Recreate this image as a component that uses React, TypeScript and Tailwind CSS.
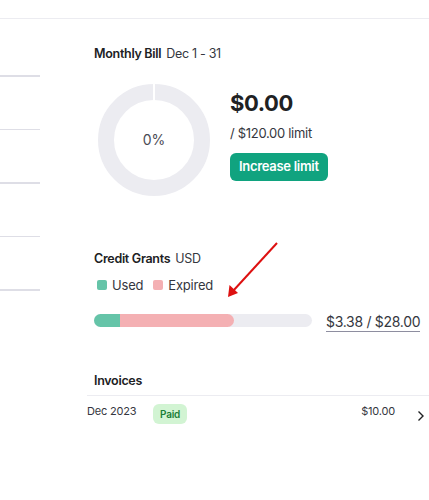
import React from "react";

const font = { fontFamily: "Inter, 'Liberation Sans', sans-serif" };

function Donut() {
  return (
    <svg width="112" height="112" viewBox="0 0 112 112" className="shrink-0">
      <circle cx="56" cy="56" r="48" fill="none" stroke="#ececf1" strokeWidth="16" />
      <line x1="56" y1="0" x2="56" y2="17" stroke="#ffffff" strokeWidth="2" />
      <text x="56" y="61" textAnchor="middle" fontSize="14" fill="#4b4b55" style={font}>
        0%
      </text>
    </svg>
  );
}

function Arrow() {
  return (
    <svg className="pointer-events-none absolute left-0 top-0" width="429" height="500">
      <line x1="277" y1="243" x2="233" y2="291" stroke="#dd1010" strokeWidth="2" />
      <polygon points="228,297 229.5,285 238,293" fill="#dd1010" />
    </svg>
  );
}

export default function App() {
  return (
    <div className="relative h-[500px] w-[429px] overflow-hidden bg-white text-[#202123]" style={font}>
      <div className="h-[19px] border-b border-[#ececf1]" />
      <div className="flex">
        <div className="w-[40px] shrink-0 pt-[56px]">
          {[0, 1, 2, 3, 4].map((i) => (
            <div key={i} className="mb-[52px] h-[1.5px] bg-[#dedee6]" />
          ))}
        </div>

        <div className="ml-[47px] flex-1">
          <section className="px-[7px] pt-[26px]">
            <div className="flex items-baseline gap-[5px] text-[12.5px] leading-[18px] tracking-[-0.3px]">
              <span className="font-semibold">Monthly Bill</span>
              <span className="text-[#353740]">Dec 1 - 31</span>
            </div>
            <div className="mt-[21px] flex items-start gap-[20px] pl-[4px]">
              <Donut />
              <div className="pt-[6px]">
                <div className="text-[22px] font-bold leading-[26px] tracking-[-0.4px]">$0.00</div>
                <div className="mt-[9px] text-[13px] leading-[16px] tracking-[-0.3px] text-[#353740]">
                  / $120.00 limit
                </div>
                <button
                  type="button"
                  className="mt-[12px] h-[28px] rounded-[6px] bg-[#10a37f] px-[9px] text-[13px] font-semibold tracking-[-0.3px] text-white"
                >
                  Increase limit
                </button>
              </div>
            </div>
          </section>

          <section className="px-[7px] pt-[54px]">
            <div className="flex items-baseline gap-[5px] text-[12.5px] leading-[18px] tracking-[-0.3px]">
              <span className="font-semibold">Credit Grants</span>
              <span className="text-[#353740]">USD</span>
            </div>
            <div className="mt-[8px] flex items-center gap-[5px] pl-[3px] text-[13px] leading-[18px] tracking-[-0.2px] text-[#353740]">
              <span className="h-[10px] w-[10px] rounded-[2px] bg-[#65c4a8]" />
              <span className="mr-[5px]">Used</span>
              <span className="h-[10px] w-[10px] rounded-[2px] bg-[#f4b0b3]" />
              <span>Expired</span>
            </div>
            <div className="mt-[15px] flex items-center gap-[14px]">
              <div className="flex h-[13px] w-[218px] shrink-0 overflow-hidden rounded-full bg-[#ececf1]">
                <div className="w-[26px] bg-[#65c4a8]" />
                <div className="w-[114px] rounded-r-full bg-[#f4b0b3]" />
              </div>
              <span className="mt-[4px] whitespace-nowrap border-b border-[#8e8ea0] text-[14px] leading-[18px] tracking-[-0.3px] text-[#353740]">
                $3.38 / $28.00
              </span>
            </div>
          </section>

          <section className="pt-[40px]">
            <div className="px-[7px] text-[12.5px] font-semibold leading-[18px] tracking-[-0.3px]">Invoices</div>
            <div className="mt-[5px] border-t border-[#ececf1]" />
            <div className="flex items-start pt-[7px] text-[11px] tracking-[-0.2px] text-[#353740]">
              <span className="w-[66px] leading-[16px]">Dec 2023</span>
              <span className="mt-[1px] rounded-[6px] bg-[#d2f4d3] px-[7px] py-[3px] text-[10px] font-semibold leading-[14px] text-[#1a7f37]">
                Paid
              </span>
              <span className="ml-auto leading-[16px]">$10.00</span>
              <svg width="10" height="12" viewBox="0 0 10 12" className="ml-[21px] mr-[3px] mt-[7px]">
                <path d="M2.5 1.5 L7 6 L2.5 10.5" fill="none" stroke="#202123" strokeWidth="1.4" />
              </svg>
            </div>
          </section>
        </div>
      </div>
      <Arrow />
    </div>
  );
}
